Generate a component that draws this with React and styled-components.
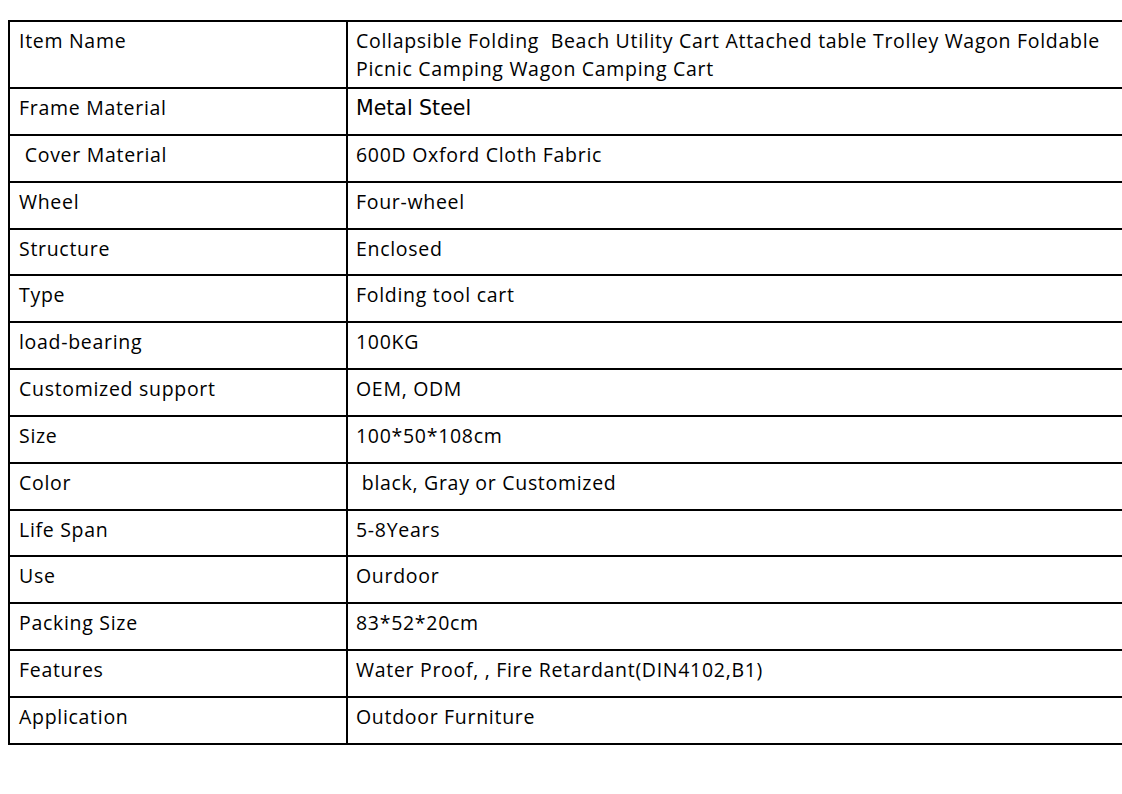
import React from 'react';
import styled, { createGlobalStyle } from 'styled-components';

const GlobalStyle = createGlobalStyle`
    html, body {
        margin: 0;
        padding: 0;
        background: #fff;
        overflow: hidden;
    }
    body {
        font-family: "Open Sans", sans-serif;
        color: #000;
    }
`

const Page = styled.div`
    padding: 20px 0 0 8px;
    width: 1140px;
`

const Table = styled.table`
    border-collapse: collapse;
    width: 1132px;
    table-layout: fixed;
`

const Row = styled.tr`
    height: ${p => p.tall ? '67px' : '46.85px'};
`

const Cell = styled.td`
    border: 2px solid #000;
    vertical-align: top;
    padding: ${p => p.label ? '5px 0 0 9px' : '5px 0 0 8px'};
    font-size: 19.5px;
    letter-spacing: 0.7px;
    line-height: 28px;
    white-space: pre-wrap;
    width: ${p => p.label ? '327px' : 'auto'};
`

const Alt = styled.span`
    font-family: "DejaVu Sans", sans-serif;
    font-size: 20.5px;
    letter-spacing: 0;
`

const rows = [
    ['Item Name', 'Collapsible Folding  Beach Utility Cart Attached table Trolley Wagon Foldable Picnic Camping Wagon Camping Cart'],
    ['Frame Material', <Alt>Metal Steel</Alt>],
    [' Cover Material', '600D Oxford Cloth Fabric'],
    ['Wheel', 'Four-wheel'],
    ['Structure', 'Enclosed'],
    ['Type', 'Folding tool cart'],
    ['load-bearing', '100KG'],
    ['Customized support', 'OEM, ODM'],
    ['Size', '100*50*108cm'],
    ['Color', ' black, Gray or Customized'],
    ['Life Span', '5-8Years'],
    ['Use', 'Ourdoor'],
    ['Packing Size', '83*52*20cm'],
    ['Features', 'Water Proof, , Fire Retardant(DIN4102,B1)'],
    ['Application', 'Outdoor Furniture'],
]

export default function App() {
    return (
        <Page>
            <GlobalStyle />
            <Table>
                <tbody>
                    {rows.map(([name, value], i) => (
                        <Row key={i} tall={i === 0}>
                            <Cell label>{name}</Cell>
                            <Cell>{value}</Cell>
                        </Row>
                    ))}
                </tbody>
            </Table>
        </Page>
    )
}
